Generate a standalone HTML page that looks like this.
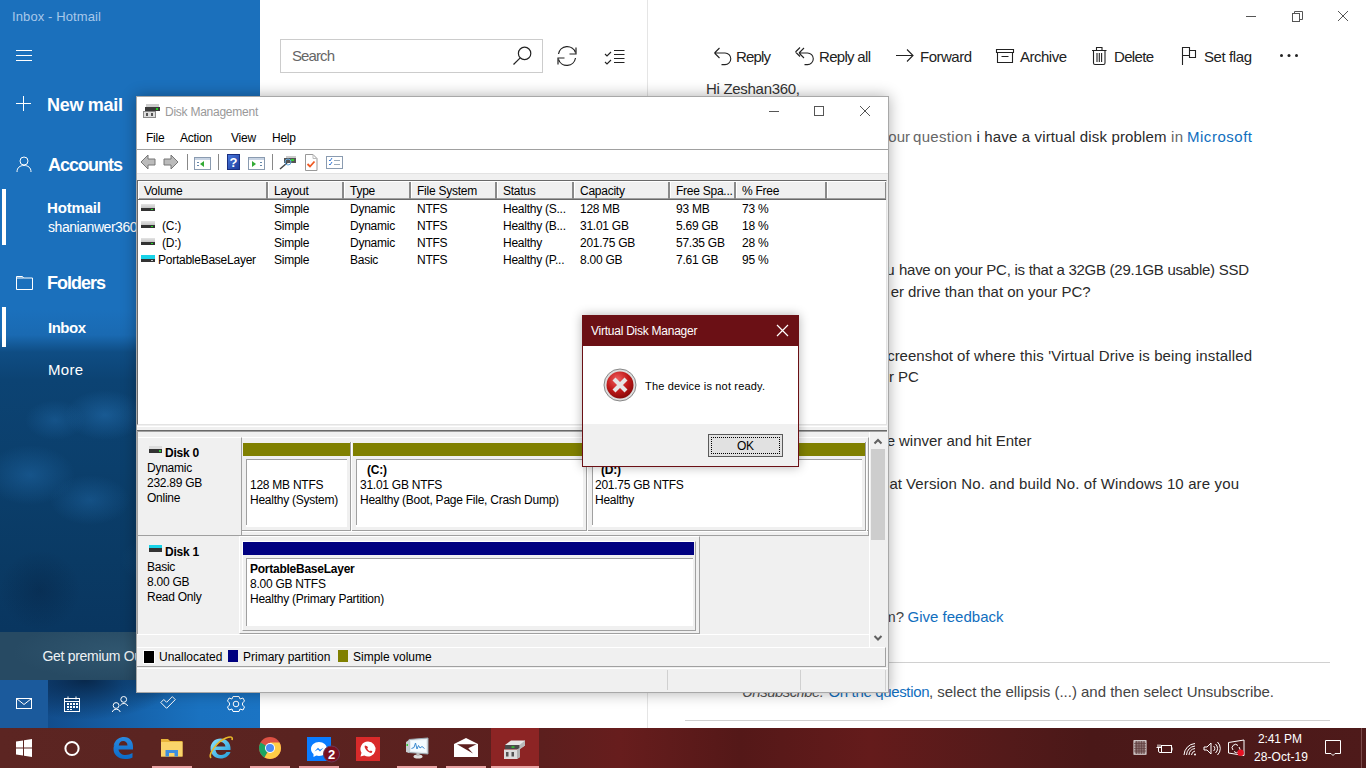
<!DOCTYPE html>
<html><head><meta charset="utf-8">
<style>
*{margin:0;padding:0;box-sizing:border-box}
html,body{width:1366px;height:768px;overflow:hidden;background:#fff;font-family:"Liberation Sans",sans-serif}
.a{position:absolute;white-space:nowrap;line-height:1}
svg.a{overflow:visible}
</style></head><body>
<div class="a" style="left:0;top:0;width:260px;height:728px;overflow:hidden;background:
radial-gradient(ellipse 40px 25px at 105px 415px,rgba(35,110,175,.55),rgba(35,110,175,0)),
radial-gradient(ellipse 30px 20px at 55px 420px,rgba(35,110,175,.4),rgba(35,110,175,0)),
radial-gradient(ellipse 45px 30px at 30px 475px,rgba(35,110,175,.45),rgba(35,110,175,0)),
radial-gradient(ellipse 40px 25px at 90px 500px,rgba(35,110,175,.4),rgba(35,110,175,0)),
radial-gradient(ellipse 50px 30px at 200px 480px,rgba(35,110,175,.35),rgba(35,110,175,0)),
radial-gradient(ellipse 60px 30px at 180px 560px,rgba(35,110,175,.3),rgba(35,110,175,0)),
radial-gradient(ellipse 40px 40px at 40px 590px,rgba(5,30,60,.35),rgba(5,30,60,0)),
linear-gradient(180deg,#1b70bc 0px,#1b70bc 310px,#1a6ab2 335px,#0f4d84 352px,#0c4373 380px,#0b3f6c 470px,#0a3a64 560px,#093660 630px)"></div><div class="a" style="left:12px;top:10.00px;font-size:13px;font-weight:normal;color:#a8c8ea;letter-spacing:0.113px;">Inbox - Hotmail</div><div class="a" style="left:16px;top:50px;width:16px;height:1px;background:#fff"></div><div class="a" style="left:16px;top:55px;width:16px;height:1px;background:#fff"></div><div class="a" style="left:16px;top:60px;width:16px;height:1px;background:#fff"></div><svg class="a" style="left:16px;top:96px" width="15" height="15"><path d="M7.5 0V15M0 7.5H15" stroke="#fff" stroke-width="1"/></svg><div class="a" style="left:47px;top:95.76px;font-size:18px;font-weight:bold;color:#fff;letter-spacing:-0.290px;">New mail</div><svg class="a" style="left:16px;top:156px" width="16" height="16" viewBox="0 0 16 16"><circle cx="8" cy="5" r="4" fill="none" stroke="#fff" stroke-width="1"/><path d="M1 16C1 11.5 4 9.5 8 9.5S15 11.5 15 16" fill="none" stroke="#fff" stroke-width="1"/></svg><div class="a" style="left:48px;top:155.76px;font-size:18px;font-weight:bold;color:#fff;letter-spacing:-1.002px;">Accounts</div><div class="a" style="left:2px;top:189px;width:4px;height:56px;background:#fff"></div><div class="a" style="left:47px;top:200.30px;font-size:15px;font-weight:bold;color:#fff;letter-spacing:-0.169px;">Hotmail</div><div class="a" style="left:48px;top:220.15px;font-size:14px;font-weight:normal;letter-spacing:-0.45px;color:#fff;">shanianwer360@hotmail.com</div><svg class="a" style="left:16px;top:275px" width="17" height="15" viewBox="0 0 17 15"><path d="M0.5 1.5H6.5L7.5 3H16.5V14.5H0.5Z" fill="none" stroke="#fff" stroke-width="1"/><path d="M0.5 3H7.5" stroke="#fff"/></svg><div class="a" style="left:47px;top:273.76px;font-size:18px;font-weight:bold;color:#fff;letter-spacing:-1.003px;">Folders</div><div class="a" style="left:2px;top:307px;width:4px;height:40px;background:#fff"></div><div class="a" style="left:48px;top:320.30px;font-size:15px;font-weight:bold;color:#fff;letter-spacing:-0.500px;">Inbox</div><div class="a" style="left:48px;top:362.30px;font-size:15px;font-weight:normal;color:#fff;letter-spacing:0.271px;">More</div><div class="a" style="left:0;top:632px;width:260px;height:48px;background:radial-gradient(ellipse 40% 60% at 45% 40%,#30566f,#274a63)"></div><div class="a" style="left:42.5px;top:649.15px;font-size:14px;font-weight:normal;letter-spacing:-0.3px;color:#eef2f5;">Get premium Outlook</div><div class="a" style="left:0;top:680px;width:260px;height:48px;background:radial-gradient(ellipse 90px 40px at 85px 0px,rgba(6,32,62,.85),rgba(6,32,62,0)),linear-gradient(90deg,#124d8c 48px,#1664ad 140px,#1a72c0 200px,#1b74c4 260px)"></div><div class="a" style="left:0;top:680px;width:48px;height:48px;background:#1b5a9c"></div><svg class="a" style="left:0;top:680px" width="260" height="47">
<g fill="none" stroke="#fff" stroke-width="1">
<rect x="16.5" y="18.5" width="15" height="10"/><path d="M16.5 18.5L24 24.5L31.5 18.5"/>
<rect x="64.5" y="18.5" width="15" height="13"/><path d="M64.5 21.5H79.5M68 16.5V19.5M76 16.5V19.5"/>
<circle cx="116.1" cy="25.5" r="2.9"/><path d="M112.2 32A4.3 4.3 0 0 1 120.3 32"/><circle cx="123.7" cy="19.4" r="2.9"/><path d="M120.2 25.5A4.3 4.3 0 0 1 127.8 26"/>
<path d="M160.8 22.5L163.8 19.5L166.6 22.3L172.3 16.6L175.3 19.6L166.6 28.3Z"/>
<circle cx="236" cy="24" r="2.8"/><path d="M233 16.5L239 16.5L240 19L243 18L244.5 21L242.5 23V25L244.5 27L243 30L240 29L239 31.5H233L232 29L229 30L227.5 27L229.5 25V23L227.5 21L229 18L232 19Z"/>
</g>
<g fill="#fff"><rect x="67" y="23" width="2" height="2"/><rect x="70" y="23" width="2" height="2"/><rect x="73" y="23" width="2" height="2"/><rect x="76" y="23" width="2" height="2"/><rect x="67" y="26" width="2" height="2"/><rect x="70" y="26" width="2" height="2"/><rect x="73" y="26" width="2" height="2"/><rect x="76" y="26" width="2" height="2"/><rect x="67" y="29" width="2" height="1"/><rect x="70" y="29" width="2" height="1"/></g>
</svg><div class="a" style="left:280px;top:39px;width:263px;height:34px;border:1px solid #cccccc;background:#fff"></div><div class="a" style="left:292px;top:48.30px;font-size:15px;font-weight:normal;color:#666;letter-spacing:-0.906px;">Search</div><svg class="a" style="left:505px;top:40px" width="130" height="30">
<g fill="none" stroke="#222" stroke-width="1.2">
<circle cx="19.6" cy="13.4" r="6.2"/><path d="M15.2 17.8L8.5 24.5"/>
<path d="M53.5 14A8.8 8.8 0 0 1 70.5 12.5M70.5 18A8.8 8.8 0 0 1 53.5 19.5"/><path d="M71 7.5V14H64.5M53 24.5V18H59.5"/>
</g>
<g fill="none" stroke="#222" stroke-width="1.1">
<path d="M100 14L102 16L106 12M100 22L102 24L106 20"/>
<path d="M109 10.5H119.5M109 14.5H119.5M109 18.5H119.5M109 22.5H119.5"/>
</g>
</svg><div class="a" style="left:647px;top:0;width:1px;height:728px;background:#e5e5e5"></div><svg class="a" style="left:1240px;top:5px" width="120" height="25">
<g fill="none" stroke="#555" stroke-width="1">
<path d="M6 11.5H16"/>
<rect x="52.5" y="8.5" width="7" height="8"/><path d="M54.5 8.5V6.5H62.5V14.5H59.5"/>
<path d="M98 6L108 16M108 6L98 16"/>
</g></svg><svg class="a" style="left:0;top:0" width="1366" height="80">
<g fill="none" stroke="#222" stroke-width="1.1">
<path d="M714.5 53L719.5 48M714.5 53L719.5 58M714.5 53H725A5.8 5.8 0 0 1 725 64.6H721.5"/>
<path d="M799 53L804 48M799 53L804 58M799 53H807.5A5.8 5.8 0 0 1 807.5 64.6H804.5M795.5 52L800 47.5M795.5 52L800 56.5"/>
<path d="M896 55.5H913M907 49.5L913 55.5L907 61.5"/>
<path d="M996.5 49.5H1013.5V52.5H996.5Z"/><path d="M997.5 52.5V62.5H1012.5V52.5M1001.5 56.5H1008.5"/>
<path d="M1092 50.5H1106.5M1096.5 50.5V47.5H1102V50.5M1093.5 50.5V63A1.5 1.5 0 0 0 1095 64.5H1103.5A1.5 1.5 0 0 0 1105 63V50.5M1097 53V62M1099.3 53V62M1101.6 53V62"/>
<path d="M1182.5 47V65M1182.5 47.5H1189.5V50.5H1195.5V57.5H1189.5V55.5H1182.5M1189.5 50.5V55.5"/>
</g>
<g fill="#222"><circle cx="1281.5" cy="55.5" r="1.5"/><circle cx="1289" cy="55.5" r="1.5"/><circle cx="1296.5" cy="55.5" r="1.5"/></g>
</svg><div class="a" style="left:736px;top:49.30px;font-size:15px;font-weight:normal;color:#222;letter-spacing:-0.840px;">Reply</div><div class="a" style="left:819px;top:49.30px;font-size:15px;font-weight:normal;color:#222;letter-spacing:-0.691px;">Reply all</div><div class="a" style="left:920px;top:49.30px;font-size:15px;font-weight:normal;color:#222;letter-spacing:-0.503px;">Forward</div><div class="a" style="left:1020px;top:49.30px;font-size:15px;font-weight:normal;color:#222;letter-spacing:-0.505px;">Archive</div><div class="a" style="left:1114px;top:49.30px;font-size:15px;font-weight:normal;color:#222;letter-spacing:-0.672px;">Delete</div><div class="a" style="left:1204px;top:49.30px;font-size:15px;font-weight:normal;color:#222;letter-spacing:-0.411px;">Set flag</div><div class="a" style="left:706px;top:80.80px;font-size:15px;font-weight:normal;color:#333;letter-spacing:-0.297px;">Hi Zeshan360,</div><div class="a" style="left:913px;top:128.80px;font-size:15px;font-weight:normal;color:#666;letter-spacing:0.326px;">question</div><div class="a" style="left:976.5px;top:128.80px;font-size:15px;font-weight:normal;color:#2a2a2a;letter-spacing:0.146px;">i have a virtual disk problem</div><div class="a" style="left:1171px;top:128.80px;font-size:15px;font-weight:normal;color:#666;letter-spacing:0.312px;">in</div><div class="a" style="left:1187px;top:128.80px;font-size:15px;font-weight:normal;color:#106ebe;letter-spacing:0.520px;">Microsoft</div><div class="a" style="right:456px;top:128.80px;font-size:15px;font-weight:normal;color:#666;">our</div><div id="l1"></div><div class="a" style="left:899px;top:262.30px;font-size:15px;font-weight:normal;color:#2a2a2a;letter-spacing:-0.271px;">have on your PC, is that a 32GB (29.1GB usable) SSD</div><div class="a" style="right:471.5px;top:262.30px;font-size:15px;font-weight:normal;color:#2a2a2a;">u</div><div class="a" style="left:908px;top:283.80px;font-size:15px;font-weight:normal;color:#2a2a2a;">drive than that on your PC?</div><div class="a" style="right:462px;top:283.80px;font-size:15px;font-weight:normal;color:#2a2a2a;">er</div><div class="a" style="left:957px;top:347.80px;font-size:15px;font-weight:normal;color:#2a2a2a;letter-spacing:0.140px;">of where this 'Virtual Drive is being installed</div><div class="a" style="right:413px;top:347.80px;font-size:15px;font-weight:normal;color:#2a2a2a;">creenshot</div><div class="a" style="left:898px;top:368.80px;font-size:15px;font-weight:normal;color:#2a2a2a;">PC</div><div class="a" style="right:472px;top:368.80px;font-size:15px;font-weight:normal;color:#2a2a2a;">r</div><div class="a" style="left:899px;top:432.80px;font-size:15px;font-weight:normal;color:#2a2a2a;">winver and hit Enter</div><div class="a" style="right:471px;top:432.80px;font-size:15px;font-weight:normal;color:#2a2a2a;">e</div><div class="a" style="left:906px;top:475.80px;font-size:15px;font-weight:normal;color:#2a2a2a;letter-spacing:0.133px;">Version No. and build No. of Windows 10 are you</div><div class="a" style="right:464px;top:475.80px;font-size:15px;font-weight:normal;color:#2a2a2a;">at</div><div class="a" style="left:907.5px;top:608.80px;font-size:15px;font-weight:normal;color:#106ebe;letter-spacing:0.009px;">Give feedback</div><div class="a" style="right:462px;top:608.80px;font-size:15px;font-weight:normal;color:#444;">problem?</div><div class="a" style="left:742px;top:684.30px;font-size:15px;font-weight:normal;font-style:italic;color:#555;letter-spacing:-0.504px;">Unsubscribe:</div><div class="a" style="left:828.5px;top:684.30px;font-size:15px;font-weight:normal;color:#106ebe;letter-spacing:-0.352px;">On the question</div><div class="a" style="left:929px;top:684.30px;font-size:15px;font-weight:normal;color:#444;letter-spacing:-0.018px;">, select the ellipsis (...) and then select Unsubscribe.</div><div class="a" style="left:685px;top:662px;width:645px;height:1px;background:#d0d0d0"></div><div class="a" style="left:685px;top:720px;width:645px;height:1px;background:#d0d0d0"></div><div class="a" style="left:0;top:728px;width:1366px;height:40px;background:linear-gradient(90deg,#5c2522 0px,#5a2320 300px,#5c1f1e 540px,#671d1d 620px,#541818 740px,#641b1b 870px,#531a1a 1010px,#4a1818 1090px,#4e1a1a 1366px)"></div><div class="a" style="left:491px;top:728px;width:48px;height:40px;background:#8c2424"></div><svg class="a" style="left:0;top:728px" width="1366" height="40">
<defs>
<linearGradient id="edg" x1="0" y1="0" x2="0" y2="1"><stop offset="0" stop-color="#2a8ae0"/><stop offset="1" stop-color="#0b6bc8"/></linearGradient>
<linearGradient id="ieg" x1="0" y1="0" x2="1" y2="1"><stop offset="0" stop-color="#8fe3ff"/><stop offset="1" stop-color="#1f9bd8"/></linearGradient>
</defs>
<!-- windows logo -->
<g fill="#fff"><path d="M16 13.5L23 12.5V19.5H16Z"/><path d="M24 12.3L32 11V19.5H24Z"/><path d="M16 20.5H23V27.5L16 26.5Z"/><path d="M24 20.5H32V29L24 27.7Z"/></g>
<!-- cortana -->
<circle cx="72" cy="20.5" r="6.6" fill="none" stroke="#fff" stroke-width="2"/>
<!-- edge -->
<path d="M113.5 18C115 11 120 9 124 9C130 9 133 13.5 133 19V21.5H118.5C119 25 122 27 125.5 27C128 27 130.5 26.3 132.5 25V29.5C130.5 30.5 128 31 125 31C118 31 113.5 26.5 113.5 21C113.5 17 116 14 119 13C116.5 14.5 115 16 113.5 18ZM118.7 17.5H127.5C127.5 14.5 125.5 13 123.2 13C120.7 13 119 15 118.7 17.5Z" fill="url(#edg)"/>
<!-- folder -->
<path d="M161 11H168L170 13H182.5V28.5H161Z" fill="#e8b43a"/>
<rect x="161" y="14" width="21.5" height="14.5" fill="#fad46b"/>
<path d="M165.5 22H178V28.5H174.5V25H169V28.5H165.5Z" fill="#3d8ee0"/>
<!-- IE -->
<path d="M210.5 20.5C210.5 14.5 215 10.5 220.5 10.5S230.5 14.5 230.5 20V22H215.5C216 25 218 27 221 27C223.5 27 225.5 26 226.5 24H230.5C229 28 225.5 30.5 220.5 30.5C215 30.5 210.5 26.5 210.5 20.5ZM215.5 18.5H225.5C225 15.5 223 14 220.5 14S216 15.5 215.5 18.5Z" fill="url(#ieg)"/>
<path d="M211 30C208 27 216 14 226 10C231 8 233 9 232 12" fill="none" stroke="#e8b828" stroke-width="1.6"/>
<!-- chrome -->
<circle cx="270" cy="20" r="11" fill="#dd5144"/>
<path d="M270 20L260.5 14.5A11 11 0 0 0 264.5 29.5Z" fill="#1da462"/>
<path d="M270 20L264.5 29.5A11 11 0 0 0 281 20Z" fill="#ffcd46"/>
<path d="M270 20L281 20A11 11 0 0 0 279.5 14.5L270 14.5Z" fill="#ffcd46"/>
<circle cx="270" cy="20" r="5" fill="#fff"/><circle cx="270" cy="20" r="4" fill="#4c8bf5"/>
<!-- messenger -->
<rect x="307" y="9" width="24" height="24" fill="#0a7cff"/>
<path d="M319 14C314.5 14 311 17 311 21C311 23 312 24.8 313.5 26V29L316.3 27.5C317.2 27.8 318 28 319 28C323.5 28 327 25 327 21S323.5 14 319 14Z" fill="#fff"/>
<path d="M314.5 23.5L318 19.8L320 21.8L323.5 19.8L320 23.5L318 21.5Z" fill="#0a7cff"/>
<circle cx="331.5" cy="26" r="8" fill="#7a1020" stroke="#6a3a5a" stroke-width="1"/>
<text x="331.5" y="31" font-size="13" font-weight="bold" fill="#fff" text-anchor="middle" font-family="Liberation Sans">2</text>
<!-- whatsapp -->
<rect x="356" y="9" width="24" height="24" fill="#d92a2a"/>
<path d="M368 13.5A7.5 7.5 0 0 0 361.5 24.8L360.5 28.5L364.3 27.5A7.5 7.5 0 1 0 368 13.5Z" fill="#fff"/>
<path d="M365 17.5C364.5 18 364.5 19 365 20C366 22 367.5 23.5 369.5 24.5C370.5 25 371.5 25 372 24.5L372.3 23.3L370.8 22.5L370 23.3C368.8 22.8 367.7 21.7 367.2 20.5L368 19.7L367.2 18.2Z" fill="#d92a2a"/>
<!-- perf monitor -->
<path d="M409 11.5L428 10V26L409 24.5Z" fill="#e8eef2" stroke="#9aa8b0" stroke-width="1"/>
<path d="M411 13L426 12V24L411 23Z" fill="#f4fbff"/>
<path d="M411.5 20.5L414 19.5L415.5 15L417 21L418.5 17.5L420 20L422 18.5L424.5 20.5" fill="none" stroke="#3b8ad0" stroke-width="1"/>
<path d="M406 14L409 12V25L406 24Z" fill="#c8ced2"/><rect x="406.5" y="16" width="1.5" height="2" fill="#3c3"/>
<ellipse cx="418" cy="28.5" rx="4.5" ry="2" fill="#ddd"/><rect x="416.5" y="25" width="3" height="3" fill="#bbb"/>
<!-- mail -->
<path d="M454 16L466 10L478 16V29H454Z" fill="#fff"/>
<path d="M457 16.3H476.5L468.3 20.2L473 25.5Z" fill="#5d1f1e"/>
<!-- disk mgmt -->
<path d="M505 17L511 12.5H525V17.5L519.5 21H505Z" fill="#e6e6e6"/>
<path d="M519.5 17L525 12.5V17.5L519.5 21.5Z" fill="#b8b8b8"/>
<path d="M505 17H519.5V21H505Z" fill="#4a4a4a"/><rect x="511.5" y="18.3" width="3" height="1.5" fill="#3c3"/>
<path d="M504 21.5H517L520 20V29L517 31H504Z" fill="#dcdcdc"/>
<path d="M517 21.5L520 20V29L517 31Z" fill="#b0b0b0"/>
<rect x="506" y="24" width="2.5" height="4.5" fill="#555"/><rect x="511.5" y="24" width="2.5" height="4.5" fill="#555"/>
<!-- underlines -->
<g fill="#e9a3a3"><rect x="152" y="38" width="40" height="2"/><rect x="250" y="38" width="40" height="2"/><rect x="299" y="38" width="40" height="2"/><rect x="397" y="38" width="40" height="2"/><rect x="446" y="38" width="40" height="2"/><rect x="491" y="38" width="48" height="2"/></g>
</svg><div class="a" style="left:136px;top:96px;width:753px;height:597px;background:#f0f0f0;border:1px solid #a8a8a8;box-shadow:0 0 14px rgba(0,0,0,.32)"></div><div class="a" style="left:137px;top:97px;width:751px;height:52px;background:#fff"></div><div class="a" style="left:165px;top:105.84px;font-size:12px;font-weight:normal;letter-spacing:-0.25px;color:#999;">Disk Management</div><div class="a" style="left:769px;top:111px;width:10px;height:1px;background:#555"></div><div class="a" style="left:814px;top:106px;width:10px;height:10px;border:1px solid #555"></div><svg class="a" style="left:859px;top:105px" width="12" height="12"><path d="M1 1L11 11M11 1L1 11" stroke="#555" stroke-width="1"/></svg><div class="a" style="left:146px;top:131.84px;font-size:12px;font-weight:normal;letter-spacing:-0.25px;color:#000;">File</div><div class="a" style="left:180px;top:131.84px;font-size:12px;font-weight:normal;letter-spacing:-0.25px;color:#000;">Action</div><div class="a" style="left:231px;top:131.84px;font-size:12px;font-weight:normal;letter-spacing:-0.25px;color:#000;">View</div><div class="a" style="left:272px;top:131.84px;font-size:12px;font-weight:normal;letter-spacing:-0.25px;color:#000;">Help</div><div class="a" style="left:137px;top:149px;width:751px;height:1px;background:#a0a0a0"></div><div class="a" style="left:137px;top:150px;width:751px;height:23px;background:#fff"></div><div class="a" style="left:137px;top:173px;width:751px;height:1px;background:#e3e3e3"></div><svg class="a" style="left:143px;top:103px" width="18" height="16" viewBox="0 0 18 16">
<rect x="3" y="1" width="13" height="3" fill="#ccc"/><rect x="2" y="4" width="15" height="4" fill="#3a3a3a"/><rect x="13" y="5" width="2" height="2" fill="#2c2"/>
<rect x="0.5" y="8.5" width="12" height="6" fill="#ddd" stroke="#888" stroke-width="1"/><rect x="3" y="10" width="2" height="3" fill="#555"/><rect x="8" y="10" width="2" height="3" fill="#555"/>
</svg><svg class="a" style="left:140px;top:153px" width="210" height="18" viewBox="0 0 210 18">
<path d="M1 9L8 2V6H15V12H8V16Z" fill="#bbb" stroke="#777" stroke-width="1"/>
<path d="M38 9L31 2V6H24V12H31V16Z" fill="#bbb" stroke="#777" stroke-width="1"/>
<rect x="47" y="1" width="1" height="16" fill="#888"/>
<rect x="54.5" y="4.5" width="16" height="12" fill="#fff" stroke="#8a9bb0"/><rect x="55" y="5" width="15" height="2" fill="#c8d4e4"/><path d="M64 8V14L60 11Z" fill="#3a3"/><rect x="57" y="9" width="2" height="1" fill="#68a"/><rect x="57" y="12" width="2" height="1" fill="#68a"/>
<rect x="78" y="1" width="1" height="16" fill="#888"/>
<defs><linearGradient id="hg" x1="0" y1="0" x2="1" y2="1"><stop offset="0" stop-color="#4a7ae0"/><stop offset="1" stop-color="#1c3a9a"/></linearGradient></defs><rect x="87.5" y="1.5" width="12" height="15" fill="url(#hg)" stroke="#1a2f80"/><text x="93.5" y="14" font-size="13" font-weight="bold" fill="#fff" text-anchor="middle" font-family="Liberation Sans">?</text>
<rect x="108.5" y="4.5" width="16" height="12" fill="#fff" stroke="#8a9bb0"/><rect x="109" y="5" width="15" height="2" fill="#c8d4e4"/><path d="M112 8V14L116 11Z" fill="#3a3"/><rect x="120" y="9" width="2" height="1" fill="#68a"/><rect x="120" y="12" width="2" height="1" fill="#68a"/>
<rect x="132" y="1" width="1" height="16" fill="#888"/>
<rect x="144" y="5" width="12" height="5" fill="#555"/><rect x="146" y="3" width="10" height="2" fill="#ccc"/><rect x="151" y="6" width="3" height="2" fill="#3c3"/><path d="M147 10L140 16" stroke="#444" stroke-width="1.5"/><circle cx="148" cy="9" r="3" fill="none" stroke="#6ad" stroke-width="1"/>
<path d="M165.5 1.5H173L177 5.5V17.5H165.5Z" fill="#fff" stroke="#999"/><path d="M173 1.5V5.5H177" fill="none" stroke="#bbb"/><path d="M167.5 11L170 13.5L174.5 8.5" stroke="#f05a22" stroke-width="1.8" fill="none"/>
<rect x="186.5" y="3.5" width="16" height="12" fill="#fff" stroke="#8a9bb0"/><path d="M189 7L190 8L192 5M189 11L190 12L192 9" stroke="#3a7bd5" stroke-width="1" fill="none"/><rect x="194" y="7" width="6" height="1" fill="#9ab"/><rect x="194" y="11" width="6" height="1" fill="#9ab"/>
</svg><div class="a" style="left:137px;top:180px;width:750px;height:245px;background:#fff;border-top:1px solid #696969;border-left:1px solid #696969;border-right:1px solid #e3e3e3;border-bottom:1px solid #e3e3e3"></div><div class="a" style="left:138px;top:181px;width:748px;height:19px;background:#f0f0f0;border-top:1px solid #fff;border-bottom:1px solid #696969"></div><div class="a" style="left:138px;top:198px;width:748px;height:1px;background:#a0a0a0"></div><div class="a" style="left:138px;top:181px;width:1px;height:18px;background:#fff"></div><div class="a" style="left:144px;top:184.84px;font-size:12px;font-weight:normal;letter-spacing:-0.25px;color:#000;">Volume</div><div class="a" style="left:266px;top:182px;width:2px;height:17px;background:#8a8a8a"></div><div class="a" style="left:268px;top:182px;width:1px;height:16px;background:#fff"></div><div class="a" style="left:274px;top:184.84px;font-size:12px;font-weight:normal;letter-spacing:-0.25px;color:#000;">Layout</div><div class="a" style="left:342px;top:182px;width:2px;height:17px;background:#8a8a8a"></div><div class="a" style="left:344px;top:182px;width:1px;height:16px;background:#fff"></div><div class="a" style="left:350px;top:184.84px;font-size:12px;font-weight:normal;letter-spacing:-0.25px;color:#000;">Type</div><div class="a" style="left:409px;top:182px;width:2px;height:17px;background:#8a8a8a"></div><div class="a" style="left:411px;top:182px;width:1px;height:16px;background:#fff"></div><div class="a" style="left:417px;top:184.84px;font-size:12px;font-weight:normal;letter-spacing:-0.25px;color:#000;">File System</div><div class="a" style="left:495px;top:182px;width:2px;height:17px;background:#8a8a8a"></div><div class="a" style="left:497px;top:182px;width:1px;height:16px;background:#fff"></div><div class="a" style="left:503px;top:184.84px;font-size:12px;font-weight:normal;letter-spacing:-0.25px;color:#000;">Status</div><div class="a" style="left:572px;top:182px;width:2px;height:17px;background:#8a8a8a"></div><div class="a" style="left:574px;top:182px;width:1px;height:16px;background:#fff"></div><div class="a" style="left:580px;top:184.84px;font-size:12px;font-weight:normal;letter-spacing:-0.25px;color:#000;">Capacity</div><div class="a" style="left:668px;top:182px;width:2px;height:17px;background:#8a8a8a"></div><div class="a" style="left:670px;top:182px;width:1px;height:16px;background:#fff"></div><div class="a" style="left:676px;top:184.84px;font-size:12px;font-weight:normal;letter-spacing:-0.25px;color:#000;">Free Spa...</div><div class="a" style="left:734px;top:182px;width:2px;height:17px;background:#8a8a8a"></div><div class="a" style="left:736px;top:182px;width:1px;height:16px;background:#fff"></div><div class="a" style="left:742px;top:184.84px;font-size:12px;font-weight:normal;letter-spacing:-0.25px;color:#000;">% Free</div><div class="a" style="left:825px;top:182px;width:2px;height:17px;background:#8a8a8a"></div><div class="a" style="left:827px;top:182px;width:1px;height:16px;background:#fff"></div><div class="a" style="left:885px;top:182px;width:1px;height:17px;background:#8a8a8a"></div><div class="a" style="left:274px;top:202.84px;font-size:12px;font-weight:normal;letter-spacing:-0.25px;color:#000;">Simple</div><div class="a" style="left:350px;top:202.84px;font-size:12px;font-weight:normal;letter-spacing:-0.25px;color:#000;">Dynamic</div><div class="a" style="left:417px;top:202.84px;font-size:12px;font-weight:normal;letter-spacing:-0.25px;color:#000;">NTFS</div><div class="a" style="left:503px;top:202.84px;font-size:12px;font-weight:normal;letter-spacing:-0.25px;color:#000;">Healthy (S...</div><div class="a" style="left:580px;top:202.84px;font-size:12px;font-weight:normal;letter-spacing:-0.25px;color:#000;">128 MB</div><div class="a" style="left:676px;top:202.84px;font-size:12px;font-weight:normal;letter-spacing:-0.25px;color:#000;">93 MB</div><div class="a" style="left:742px;top:202.84px;font-size:12px;font-weight:normal;letter-spacing:-0.25px;color:#000;">73 %</div><div class="a" style="left:141px;top:204px;width:14px;height:4px;background:linear-gradient(#e4e4e4,#c4c4c4)"></div><div class="a" style="left:141px;top:208px;width:14px;height:3px;background:#333"></div><div class="a" style="left:151px;top:209px;width:2px;height:1px;background:#2d2"></div><div class="a" style="left:162px;top:219.84px;font-size:12px;font-weight:normal;letter-spacing:-0.25px;color:#000;">(C:)</div><div class="a" style="left:274px;top:219.84px;font-size:12px;font-weight:normal;letter-spacing:-0.25px;color:#000;">Simple</div><div class="a" style="left:350px;top:219.84px;font-size:12px;font-weight:normal;letter-spacing:-0.25px;color:#000;">Dynamic</div><div class="a" style="left:417px;top:219.84px;font-size:12px;font-weight:normal;letter-spacing:-0.25px;color:#000;">NTFS</div><div class="a" style="left:503px;top:219.84px;font-size:12px;font-weight:normal;letter-spacing:-0.25px;color:#000;">Healthy (B...</div><div class="a" style="left:580px;top:219.84px;font-size:12px;font-weight:normal;letter-spacing:-0.25px;color:#000;">31.01 GB</div><div class="a" style="left:676px;top:219.84px;font-size:12px;font-weight:normal;letter-spacing:-0.25px;color:#000;">5.69 GB</div><div class="a" style="left:742px;top:219.84px;font-size:12px;font-weight:normal;letter-spacing:-0.25px;color:#000;">18 %</div><div class="a" style="left:141px;top:221px;width:14px;height:4px;background:linear-gradient(#e4e4e4,#c4c4c4)"></div><div class="a" style="left:141px;top:225px;width:14px;height:3px;background:#333"></div><div class="a" style="left:151px;top:226px;width:2px;height:1px;background:#2d2"></div><div class="a" style="left:162px;top:236.84px;font-size:12px;font-weight:normal;letter-spacing:-0.25px;color:#000;">(D:)</div><div class="a" style="left:274px;top:236.84px;font-size:12px;font-weight:normal;letter-spacing:-0.25px;color:#000;">Simple</div><div class="a" style="left:350px;top:236.84px;font-size:12px;font-weight:normal;letter-spacing:-0.25px;color:#000;">Dynamic</div><div class="a" style="left:417px;top:236.84px;font-size:12px;font-weight:normal;letter-spacing:-0.25px;color:#000;">NTFS</div><div class="a" style="left:503px;top:236.84px;font-size:12px;font-weight:normal;letter-spacing:-0.25px;color:#000;">Healthy</div><div class="a" style="left:580px;top:236.84px;font-size:12px;font-weight:normal;letter-spacing:-0.25px;color:#000;">201.75 GB</div><div class="a" style="left:676px;top:236.84px;font-size:12px;font-weight:normal;letter-spacing:-0.25px;color:#000;">57.35 GB</div><div class="a" style="left:742px;top:236.84px;font-size:12px;font-weight:normal;letter-spacing:-0.25px;color:#000;">28 %</div><div class="a" style="left:141px;top:238px;width:14px;height:4px;background:linear-gradient(#e4e4e4,#c4c4c4)"></div><div class="a" style="left:141px;top:242px;width:14px;height:3px;background:#333"></div><div class="a" style="left:151px;top:243px;width:2px;height:1px;background:#2d2"></div><div class="a" style="left:158px;top:253.84px;font-size:12px;font-weight:normal;letter-spacing:-0.25px;color:#000;">PortableBaseLayer</div><div class="a" style="left:274px;top:253.84px;font-size:12px;font-weight:normal;letter-spacing:-0.25px;color:#000;">Simple</div><div class="a" style="left:350px;top:253.84px;font-size:12px;font-weight:normal;letter-spacing:-0.25px;color:#000;">Basic</div><div class="a" style="left:417px;top:253.84px;font-size:12px;font-weight:normal;letter-spacing:-0.25px;color:#000;">NTFS</div><div class="a" style="left:503px;top:253.84px;font-size:12px;font-weight:normal;letter-spacing:-0.25px;color:#000;">Healthy (P...</div><div class="a" style="left:580px;top:253.84px;font-size:12px;font-weight:normal;letter-spacing:-0.25px;color:#000;">8.00 GB</div><div class="a" style="left:676px;top:253.84px;font-size:12px;font-weight:normal;letter-spacing:-0.25px;color:#000;">7.61 GB</div><div class="a" style="left:742px;top:253.84px;font-size:12px;font-weight:normal;letter-spacing:-0.25px;color:#000;">95 %</div><div class="a" style="left:141px;top:255px;width:14px;height:4px;background:#19d3e8"></div><div class="a" style="left:141px;top:259px;width:14px;height:3px;background:#333"></div><div class="a" style="left:151px;top:260px;width:2px;height:1px;background:#ccc"></div><div class="a" style="left:137px;top:426px;width:750px;height:1px;background:#fff"></div><div class="a" style="left:137px;top:430px;width:750px;height:1px;background:#696969"></div><div class="a" style="left:137px;top:431px;width:750px;height:1px;background:#a0a0a0"></div><div class="a" style="left:138px;top:437px;width:103px;height:99px;background:#f0f0f0;border-top:1px solid #fff;border-bottom:1px solid #a0a0a0"></div><div class="a" style="left:138px;top:536px;width:101px;height:98px;background:#f0f0f0"></div><div class="a" style="left:149px;top:446px;width:13px;height:3px;background:#ddd"></div><div class="a" style="left:149px;top:449px;width:13px;height:4px;background:#333"></div><div class="a" style="left:159px;top:450px;width:2px;height:2px;background:#3c3"></div><div class="a" style="left:165px;top:446.84px;font-size:12px;font-weight:bold;letter-spacing:-0.25px;color:#000;">Disk 0</div><div class="a" style="left:147px;top:461.84px;font-size:12px;font-weight:normal;letter-spacing:-0.25px;color:#000;">Dynamic</div><div class="a" style="left:147px;top:476.84px;font-size:12px;font-weight:normal;letter-spacing:-0.25px;color:#000;">232.89 GB</div><div class="a" style="left:147px;top:491.84px;font-size:12px;font-weight:normal;letter-spacing:-0.25px;color:#000;">Online</div><div class="a" style="left:241px;top:437px;width:628px;height:99px;border-top:1px solid #fff;border-left:1px solid #a0a0a0;border-right:1px solid #a0a0a0;border-bottom:1px solid #a0a0a0"></div><div class="a" style="left:242px;top:530px;width:626px;height:1px;background:#a0a0a0"></div><div class="a" style="left:242px;top:531px;width:626px;height:1px;background:#fff"></div><div class="a" style="left:243px;top:443px;width:107px;height:13px;background:#808000"></div><div class="a" style="left:246px;top:459px;width:101px;height:68px;background:#fff;border-top:1px solid #a0a0a0;border-left:1px solid #a0a0a0"></div><div class="a" style="left:246px;top:525px;width:1px;height:2px;background:#fff"></div><div class="a" style="left:350px;top:442px;width:1px;height:89px;background:#a0a0a0"></div><div class="a" style="left:351px;top:442px;width:1px;height:89px;background:#fff"></div><div class="a" style="left:353px;top:443px;width:233px;height:13px;background:#808000"></div><div class="a" style="left:356px;top:459px;width:227px;height:68px;background:#fff;border-top:1px solid #a0a0a0;border-left:1px solid #a0a0a0"></div><div class="a" style="left:356px;top:525px;width:1px;height:2px;background:#fff"></div><div class="a" style="left:586px;top:442px;width:1px;height:89px;background:#a0a0a0"></div><div class="a" style="left:587px;top:442px;width:1px;height:89px;background:#fff"></div><div class="a" style="left:589px;top:443px;width:276px;height:13px;background:#808000"></div><div class="a" style="left:592px;top:459px;width:270px;height:68px;background:#fff;border-top:1px solid #a0a0a0;border-left:1px solid #a0a0a0"></div><div class="a" style="left:592px;top:525px;width:1px;height:2px;background:#fff"></div><div class="a" style="left:865px;top:442px;width:1px;height:89px;background:#a0a0a0"></div><div class="a" style="left:866px;top:442px;width:1px;height:89px;background:#fff"></div><div class="a" style="left:250px;top:478.84px;font-size:12px;font-weight:normal;letter-spacing:-0.25px;color:#000;">128 MB NTFS</div><div class="a" style="left:250px;top:493.84px;font-size:12px;font-weight:normal;letter-spacing:-0.25px;color:#000;">Healthy (System)</div><div class="a" style="left:367px;top:463.84px;font-size:12px;font-weight:bold;letter-spacing:-0.25px;color:#000;">(C:)</div><div class="a" style="left:360px;top:478.84px;font-size:12px;font-weight:normal;letter-spacing:-0.25px;color:#000;">31.01 GB NTFS</div><div class="a" style="left:360px;top:493.84px;font-size:12px;font-weight:normal;letter-spacing:-0.25px;color:#000;">Healthy (Boot, Page File, Crash Dump)</div><div class="a" style="left:601px;top:463.84px;font-size:12px;font-weight:bold;letter-spacing:-0.25px;color:#000;">(D:)</div><div class="a" style="left:595px;top:478.84px;font-size:12px;font-weight:normal;letter-spacing:-0.25px;color:#000;">201.75 GB NTFS</div><div class="a" style="left:595px;top:493.84px;font-size:12px;font-weight:normal;letter-spacing:-0.25px;color:#000;">Healthy</div><div class="a" style="left:149px;top:545px;width:13px;height:3px;background:#19d3e8"></div><div class="a" style="left:149px;top:548px;width:13px;height:4px;background:#333"></div><div class="a" style="left:165px;top:545.84px;font-size:12px;font-weight:bold;letter-spacing:-0.25px;color:#000;">Disk 1</div><div class="a" style="left:147px;top:560.84px;font-size:12px;font-weight:normal;letter-spacing:-0.25px;color:#000;">Basic</div><div class="a" style="left:147px;top:575.84px;font-size:12px;font-weight:normal;letter-spacing:-0.25px;color:#000;">8.00 GB</div><div class="a" style="left:147px;top:590.84px;font-size:12px;font-weight:normal;letter-spacing:-0.25px;color:#000;">Read Only</div><div class="a" style="left:239px;top:536px;width:461px;height:98px;border-top:1px solid #fff;border-left:1px solid #fff;border-right:1px solid #a0a0a0;border-bottom:1px solid #a0a0a0"></div><div class="a" style="left:242px;top:541px;width:454px;height:90px;border-top:1px solid #fff;border-left:1px solid #fff;border-right:1px solid #a0a0a0;border-bottom:1px solid #a0a0a0"></div><div class="a" style="left:243px;top:542px;width:451px;height:13px;background:#000080"></div><div class="a" style="left:246px;top:558px;width:447px;height:68px;background:#fff;border-top:1px solid #a0a0a0;border-left:1px solid #a0a0a0"></div><div class="a" style="left:250px;top:562.84px;font-size:12px;font-weight:bold;letter-spacing:-0.25px;color:#000;">PortableBaseLayer</div><div class="a" style="left:250px;top:577.84px;font-size:12px;font-weight:normal;letter-spacing:-0.25px;color:#000;">8.00 GB NTFS</div><div class="a" style="left:250px;top:592.84px;font-size:12px;font-weight:normal;letter-spacing:-0.25px;color:#000;">Healthy (Primary Partition)</div><div class="a" style="left:137px;top:432px;width:1px;height:202px;background:#a0a0a0"></div><div class="a" style="left:137px;top:634px;width:732px;height:1px;background:#fff"></div><div class="a" style="left:869px;top:432px;width:17px;height:215px;background:#f0f0f0;border-left:1px solid #fff"></div><div class="a" style="left:871px;top:449px;width:14px;height:91px;background:#cdcdcd"></div><svg class="a" style="left:873px;top:437px" width="10" height="8"><path d="M1.5 6.5L5 3L8.5 6.5" stroke="#606060" stroke-width="2" fill="none"/></svg><svg class="a" style="left:873px;top:634px" width="10" height="8"><path d="M1.5 2L5 5.5L8.5 2" stroke="#606060" stroke-width="2" fill="none"/></svg><div class="a" style="left:137px;top:647px;width:749px;height:20px;border-top:1px solid #fff;border-bottom:1px solid #a0a0a0;border-right:1px solid #a0a0a0"></div><div class="a" style="left:143px;top:650px;width:12px;height:14px;background:#000;border:1px solid #fff"></div><div class="a" style="left:159px;top:650.84px;font-size:12px;font-weight:normal;letter-spacing:0px;color:#000;">Unallocated</div><div class="a" style="left:228px;top:650px;width:10px;height:12px;background:#000080"></div><div class="a" style="left:243px;top:650.84px;font-size:12px;font-weight:normal;letter-spacing:0px;color:#000;">Primary partition</div><div class="a" style="left:338px;top:650px;width:10px;height:12px;background:#808000"></div><div class="a" style="left:353px;top:650.84px;font-size:12px;font-weight:normal;letter-spacing:0px;color:#000;">Simple volume</div><div class="a" style="left:137px;top:668px;width:751px;height:1px;background:#fff"></div><div class="a" style="left:667px;top:670px;width:1px;height:20px;background:#d0d0d0"></div><div class="a" style="left:800px;top:670px;width:1px;height:20px;background:#d0d0d0"></div><div class="a" style="left:885px;top:670px;width:1px;height:21px;background:#d0d0d0"></div><div class="a" style="left:582px;top:315px;width:217px;height:152px;background:#f0f0f0;border:1px solid #6b1015;box-shadow:0 0 10px rgba(0,0,0,.3)"></div><div class="a" style="left:583px;top:316px;width:215px;height:30px;background:#6b1015"></div><div class="a" style="left:591px;top:324.84px;font-size:12px;font-weight:normal;letter-spacing:-0.25px;color:#fff;">Virtual Disk Manager</div><svg class="a" style="left:776px;top:324px" width="13" height="13"><path d="M1 1L12 12M12 1L1 12" stroke="#fff" stroke-width="1.2"/></svg><div class="a" style="left:583px;top:346px;width:215px;height:78px;background:#fff"></div><svg class="a" style="left:603px;top:368px" width="34" height="34" viewBox="0 0 34 34">
<defs><radialGradient id="eg" cx="40%" cy="30%" r="70%"><stop offset="0" stop-color="#f06060"/><stop offset="0.6" stop-color="#c01818"/><stop offset="1" stop-color="#8a0a0a"/></radialGradient></defs>
<circle cx="17" cy="17" r="16" fill="#ddd" stroke="#888" stroke-width="1"/>
<circle cx="17" cy="17" r="13.5" fill="url(#eg)"/>
<path d="M11 11L23 23M23 11L11 23" stroke="#e6e6e6" stroke-width="4.2" stroke-linecap="butt"/>
</svg><div class="a" style="left:645px;top:380.69px;font-size:11px;font-weight:normal;color:#000;letter-spacing:0.175px;">The device is not ready.</div><div class="a" style="left:708px;top:434px;width:75px;height:23px;background:#e1e1e1;border:1px solid #5a5a5a"></div><div class="a" style="left:711px;top:437px;width:69px;height:17px;border:1px dotted #000"></div><div class="a" style="left:737px;top:439.84px;font-size:12px;font-weight:normal;letter-spacing:-0.25px;color:#000;">OK</div><svg class="a" style="left:0;top:728px" width="1366" height="40">
<rect x="1134" y="12.7" width="12" height="13.5" fill="#8a7070" stroke="#eee" stroke-width="1"/>
<g stroke="#5a3a3a" stroke-width="0.6"><path d="M1136.5 13V26M1139 13V26M1141.5 13V26M1144 13V26M1134 15.5H1146M1134 18H1146M1134 20.5H1146M1134 23H1146"/></g>
<g fill="none" stroke="#fff" stroke-width="1">
<path d="M1156.5 19.5H1161M1158 16.5V19M1160 16.5V19M1158.5 19.5V23A1.5 1.5 0 0 0 1160 24.5H1161"/>
<rect x="1161.5" y="17.5" width="10" height="7"/><path d="M1172 19.5V22.5"/>
<path d="M1184 27A12 12 0 0 1 1195 15.5M1186.5 27A9.5 9.5 0 0 1 1195 18M1189 27A7 7 0 0 1 1195 20.5M1191.5 27A4.5 4.5 0 0 1 1195 23"/>
<path d="M1204 19H1207L1211 15V26L1207 22H1204Z"/><path d="M1213.5 18A3 3 0 0 1 1213.5 23M1215.5 16A6 6 0 0 1 1215.5 25M1217.5 14A9 9 0 0 1 1217.5 27"/>
<path d="M1228.5 14.5L1244 12V27.5L1228.5 25Z"/>
<path d="M1340.5 12.5H1325.5V25.5H1331L1333 27.5L1335 25.5H1340.5Z"/>
</g>
<circle cx="1195" cy="26.5" r="1" fill="#fff"/>
<path d="M1233 22A3 3 0 0 1 1238 17.5M1239 19A3 3 0 0 1 1234 23.5" fill="none" stroke="#fff" stroke-width="1"/>
<circle cx="1240.6" cy="24.7" r="3.2" fill="#e81123"/>
<rect x="1361" y="0" width="1" height="40" fill="#7a4a4a"/>
</svg><div class="a" style="left:1258px;top:732.84px;font-size:12px;font-weight:normal;color:#fff;letter-spacing:-0.117px;">2:41 PM</div><div class="a" style="left:1254px;top:750.84px;font-size:12px;font-weight:normal;color:#fff;letter-spacing:0.080px;">28-Oct-19</div></body></html>
